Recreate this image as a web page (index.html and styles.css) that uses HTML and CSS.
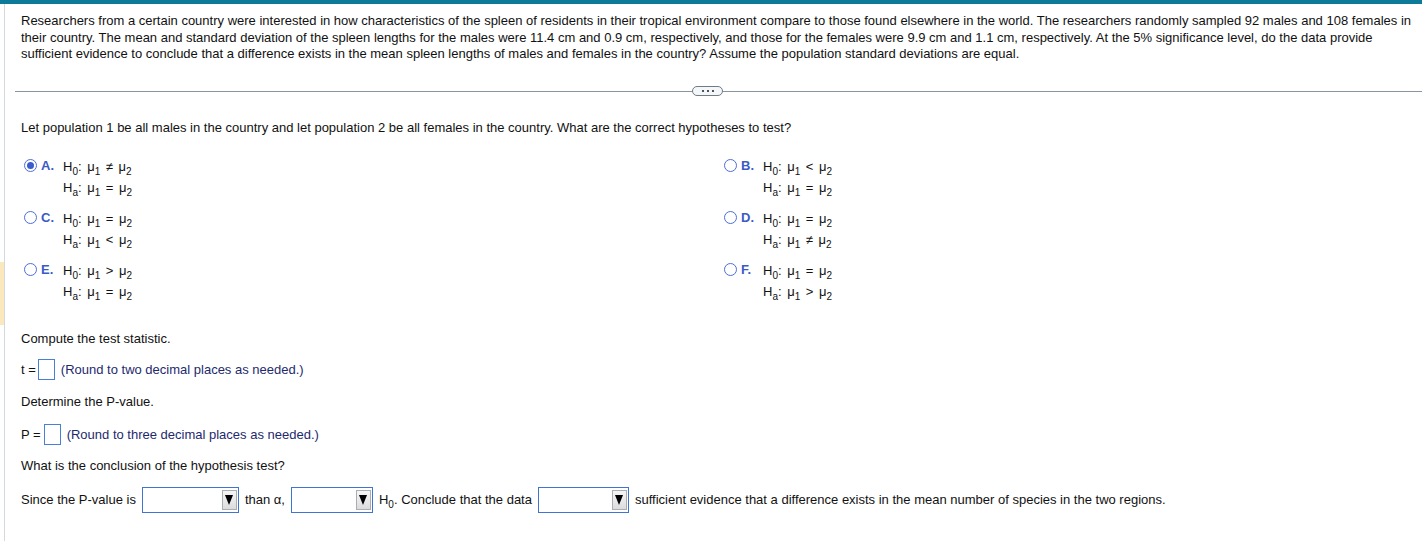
FILE: index.html
```html
<!DOCTYPE html>
<html>
<head>
<meta charset="utf-8">
<link rel="stylesheet" href="styles.css">
</head>
<body>
<div class="topbar"></div>
<div class="page">
  <div class="marker"></div>
  <p class="stem">Researchers from a certain country were interested in how characteristics of the spleen of residents in their tropical environment compare to those found elsewhere in the world. The researchers randomly sampled 92 males and 108 females in their country. The mean and standard deviation of the spleen lengths for the males were 11.4 cm and 0.9 cm, respectively, and those for the females were 9.9 cm and 1.1 cm, respectively. At the 5% significance level, do the data provide sufficient evidence to conclude that a difference exists in the mean spleen lengths of males and females in the country? Assume the population standard deviations are equal.</p>
  <div class="divider"><span class="more"><i></i><i></i><i></i></span></div>

  <p class="q">Let population 1 be all males in the country and let population 2 be all females in the country. What are the correct hypotheses to test?</p>

  <div class="options">
    <div class="opt">
      <span class="radio checked"></span><span class="lab">A.</span>
      <div class="hyp">
        <div>H<sub>0</sub>: μ<sub>1</sub> ≠ μ<sub>2</sub></div>
        <div>H<sub>a</sub>: μ<sub>1</sub> = μ<sub>2</sub></div>
      </div>
    </div>
    <div class="opt">
      <span class="radio"></span><span class="lab">B.</span>
      <div class="hyp">
        <div>H<sub>0</sub>: μ<sub>1</sub> &lt; μ<sub>2</sub></div>
        <div>H<sub>a</sub>: μ<sub>1</sub> = μ<sub>2</sub></div>
      </div>
    </div>
    <div class="opt">
      <span class="radio"></span><span class="lab">C.</span>
      <div class="hyp">
        <div>H<sub>0</sub>: μ<sub>1</sub> = μ<sub>2</sub></div>
        <div>H<sub>a</sub>: μ<sub>1</sub> &lt; μ<sub>2</sub></div>
      </div>
    </div>
    <div class="opt">
      <span class="radio"></span><span class="lab">D.</span>
      <div class="hyp">
        <div>H<sub>0</sub>: μ<sub>1</sub> = μ<sub>2</sub></div>
        <div>H<sub>a</sub>: μ<sub>1</sub> ≠ μ<sub>2</sub></div>
      </div>
    </div>
    <div class="opt">
      <span class="radio"></span><span class="lab">E.</span>
      <div class="hyp">
        <div>H<sub>0</sub>: μ<sub>1</sub> &gt; μ<sub>2</sub></div>
        <div>H<sub>a</sub>: μ<sub>1</sub> = μ<sub>2</sub></div>
      </div>
    </div>
    <div class="opt">
      <span class="radio"></span><span class="lab">F.</span>
      <div class="hyp">
        <div>H<sub>0</sub>: μ<sub>1</sub> = μ<sub>2</sub></div>
        <div>H<sub>a</sub>: μ<sub>1</sub> &gt; μ<sub>2</sub></div>
      </div>
    </div>
  </div>

  <p class="q compute">Compute the test statistic.</p>
  <div class="ansrow">t =<span class="box"></span><span class="note">(Round to two decimal places as needed.)</span></div>
  <p class="q gap">Determine the P-value.</p>
  <div class="ansrow ansrow2">P =<span class="box"></span><span class="note">(Round to three decimal places as needed.)</span></div>
  <p class="q gap">What is the conclusion of the hypothesis test?</p>
  <div class="concl">
    <span>Since the P-value is</span>
    <span class="sel w1"><span class="arrow"></span></span>
    <span>than α,</span>
    <span class="sel w2"><span class="arrow"></span></span>
    <span>H<sub>0</sub>. Conclude that the data</span>
    <span class="sel w3"><span class="arrow"></span></span>
    <span>sufficient evidence that a difference exists in the mean number of species in the two regions.</span>
  </div>
</div>
</body>
</html>
```

FILE: styles.css
```css
html, body {
  margin: 0;
  padding: 0;
  background: #fff;
}
body {
  font-family: "Liberation Sans", Arial, sans-serif;
  font-size: 13px;
  color: #111;
}
.topbar {
  height: 4px;
  background: #0d7a9a;
}
.page {
  position: relative;
  margin-left: 4px;
  border-left: 1px solid #d3d9e1;
  min-height: 537px;
  padding: 9px 0 0 16px;
  box-sizing: border-box;
}
.marker {
  position: absolute;
  left: -5px;
  top: 258px;
  width: 4px;
  height: 63px;
  background: #fbe8bc;
}
.stem {
  margin: 0;
  padding-right: 8px;
  line-height: 16.5px;
}
.divider {
  position: relative;
  margin: 28px 0 0 -6px;
  height: 1px;
  background: #8b939c;
}
.more {
  position: absolute;
  left: 677px;
  top: -5px;
  width: 29px;
  height: 8px;
  border: 1px solid #6f7b87;
  border-radius: 5px;
  background: #f4f6f8;
  display: flex;
  justify-content: center;
  align-items: center;
  gap: 3px;
}
.more i {
  width: 2px;
  height: 2px;
  background: #4a5560;
}
.q {
  margin: 0;
  line-height: 16.5px;
}
.divider + .q {
  margin-top: 28px;
}
.options {
  display: grid;
  grid-template-columns: 700px 700px;
  row-gap: 10px;
  margin-top: 20px;
  padding-left: 3px;
}
.opt {
  display: flex;
  align-items: flex-start;
}
.radio {
  width: 11px;
  height: 11px;
  border: 1.5px solid #4d6fd6;
  border-radius: 50%;
  margin-top: 3px;
  flex: none;
  position: relative;
}
.radio.checked::after {
  content: "";
  position: absolute;
  left: 2px;
  top: 2px;
  width: 7px;
  height: 7px;
  border-radius: 50%;
  background: #3b5cce;
}
.lab {
  width: 22px;
  margin-left: 4px;
  color: #3a5bc6;
  font-weight: bold;
  line-height: 20px;
  flex: none;
}
.hyp {
  line-height: 21px;
  color: #111;
  word-spacing: 2px;
}
sub {
  font-size: 10px;
  vertical-align: -4px;
  line-height: 0;
}
.compute {
  margin-top: 29px;
}
.ansrow {
  display: flex;
  align-items: center;
  height: 22px;
  margin-top: 11px;
}
.box {
  display: inline-block;
  width: 15px;
  height: 19px;
  border: 1px solid #4a7fd6;
  margin-left: 2px;
}
.note {
  margin-left: 6px;
  color: #1e2a6e;
}
.ansrow2 {
  margin-top: 13px;
}
.ansrow2 .box {
  margin-left: 3px;
}
.gap {
  margin-top: 13px;
}
.concl {
  display: flex;
  align-items: center;
  gap: 6px;
  margin-top: 12px;
  height: 26px;
}
.sel {
  position: relative;
  display: inline-block;
  height: 24px;
  border: 1px solid #3f74d2;
  background: #fff;
  box-sizing: content-box;
}
.w1 { width: 95px; }
.w2 { width: 80px; }
.w3 { width: 89px; }
.arrow {
  position: absolute;
  right: 1px;
  top: 2px;
  width: 13px;
  height: 18px;
  border: 1px solid #a9aeb4;
  background: linear-gradient(#f6f6f6, #dcdcdc);
}
.arrow::after {
  content: "";
  position: absolute;
  left: 2px;
  top: 4px;
  border-left: 4.5px solid transparent;
  border-right: 4.5px solid transparent;
  border-top: 10px solid #000;
}
```
